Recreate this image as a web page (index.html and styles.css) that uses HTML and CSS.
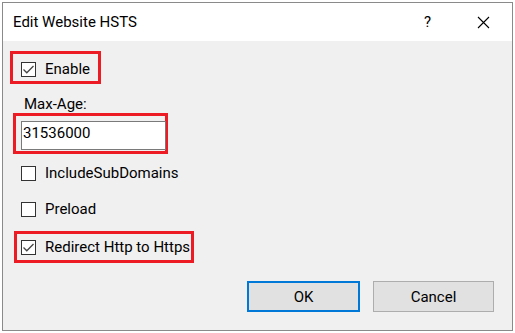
FILE: index.html
```html
<!DOCTYPE html>
<html>
<head>
<meta charset="utf-8">
<link rel="stylesheet" href="styles.css">
</head>
<body>
<div class="dialog">
  <div class="titlebar">
    <span class="title">Edit Website HSTS</span>
    <span class="help">?</span>
    <svg class="close" width="13" height="13" viewBox="0 0 13 13"><path d="M1 1L12 12M12 1L1 12" stroke="#000" stroke-width="1.1" fill="none"/></svg>
  </div>
  <div class="content">
    <div class="mark mark-enable">
      <div class="row">
        <span class="cb"><svg width="13" height="13" viewBox="0 0 13 13"><path d="M1.5 6.5L4.8 9.8L11.5 3" stroke="#444" stroke-width="1.3" fill="none"/></svg></span>
        <span class="lbl">Enable</span>
      </div>
    </div>
    <div class="field-label">Max-Age:</div>
    <div class="mark mark-input">
      <div class="input">31536000</div>
    </div>
    <div class="row plain first">
      <span class="cb"></span>
      <span class="lbl">IncludeSubDomains</span>
    </div>
    <div class="row plain second">
      <span class="cb"></span>
      <span class="lbl">Preload</span>
    </div>
    <div class="mark mark-redirect">
      <div class="row">
        <span class="cb"><svg width="13" height="13" viewBox="0 0 13 13"><path d="M1.5 6.5L4.8 9.8L11.5 3" stroke="#444" stroke-width="1.3" fill="none"/></svg></span>
        <span class="lbl">Redirect Http to Https</span>
      </div>
    </div>
    <div class="buttons">
      <div class="btn btn-ok">OK</div>
      <div class="btn btn-cancel">Cancel</div>
    </div>
  </div>
</div>
</body>
</html>
```
FILE: styles.css
```css
html, body {
  margin: 0;
  padding: 0;
  background: #ffffff;
}
body {
  padding: 2px 0 0 2px;
  font-family: Roboto, "Liberation Sans", sans-serif;
  font-size: 15px;
  line-height: 18px;
  color: #000;
}
.dialog {
  width: 511px;
  height: 329px;
  box-sizing: border-box;
  border: 1px solid #8a8a8a;
  background: #f0f0f0;
  display: flex;
  flex-direction: column;
}
.titlebar {
  height: 38px;
  background: #fff;
  display: flex;
  align-items: center;
  padding-left: 10px;
}
.title {
  flex: 1;
}
.help {
  width: 8px;
  margin-right: 45px;
}
.close {
  margin-right: 22px;
}
.content {
  flex: 1;
  display: flex;
  flex-direction: column;
  align-items: flex-start;
  padding-left: 7px;
}
.mark {
  border: 3px solid #ed1c24;
  box-sizing: border-box;
}
.row {
  display: flex;
  align-items: center;
  height: 18px;
}
.cb {
  width: 15px;
  height: 15px;
  box-sizing: border-box;
  border: 1px solid #333;
  background: #fff;
  display: flex;
  align-items: center;
  justify-content: center;
  margin-right: 9px;
}
.mark-enable {
  margin-top: 10px;
  width: 91px;
  height: 33px;
  padding: 6px 0 0 8px;
}
.field-label {
  margin-top: 11px;
  margin-left: 14px;
}
.mark-input {
  margin-left: 3px;
  width: 155px;
  height: 41px;
  padding: 5px 0 0 5px;
}
.input {
  width: 145px;
  height: 29px;
  box-sizing: border-box;
  border: 1px solid #7a7a7a;
  background: #fff;
  padding: 2px 0 0 1px;
}
.plain {
  margin-left: 11px;
}
.first {
  margin-top: 10px;
}
.second {
  margin-top: 18px;
}
.mark-redirect {
  margin-top: 13px;
  margin-left: 4px;
  width: 180px;
  height: 32px;
  padding: 4px 0 0 4px;
}
.buttons {
  align-self: stretch;
  display: flex;
  justify-content: flex-end;
  gap: 13px;
  margin-top: 18px;
  padding-right: 18px;
}
.btn {
  height: 31px;
  box-sizing: border-box;
  background: #e1e1e1;
  display: flex;
  align-items: center;
  justify-content: center;
}
.btn-ok {
  width: 113px;
  border: 2px solid #0078d7;
}
.btn-cancel {
  width: 121px;
  border: 1px solid #adadad;
}
```
